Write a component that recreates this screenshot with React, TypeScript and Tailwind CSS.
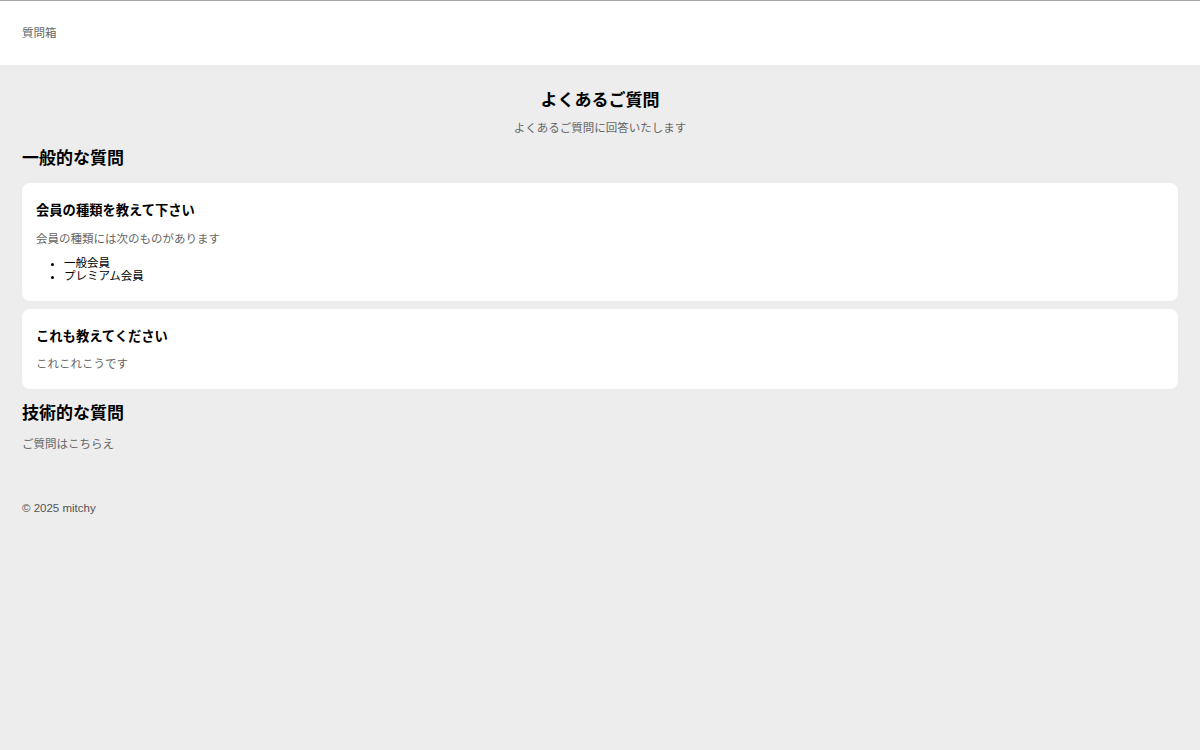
const font = { fontFamily: '"Liberation Sans", "Noto Sans CJK JP", sans-serif' };

const App = () => {
    return (
        <div className="min-h-screen bg-[#ededed]" style={font}>
            {/* ヘッダー */}
            <header className="h-[65px] border-t border-[#a3a3a3] bg-white px-[22px] flex items-center">
                <span className="text-[11.5px] leading-4 text-[#666]">質問箱</span>
            </header>

            <main className="px-[22px] pt-6">
                <h1 className="text-center text-[17px] leading-6 font-bold text-black">よくあるご質問</h1>
                <p className="mt-[7px] text-center text-[11.5px] leading-4 text-[#666]">よくあるご質問に回答いたします</p>

                <h2 className="mt-[11px] text-[17px] leading-6 font-bold text-black">一般的な質問</h2>

                <div className="mt-3 rounded-lg bg-white px-[14px] pt-[18px] pb-[18px]">
                    <h3 className="text-[13.3px] leading-5 font-bold text-black">会員の種類を教えて下さい</h3>
                    <p className="mt-[10px] text-[11.5px] leading-4 text-[#666]">会員の種類には次のものがあります</p>
                    <ul className="mt-[10px] list-disc pl-[28px] text-[11.5px] leading-[13px] text-black">
                        <li>一般会員</li>
                        <li>プレミアム会員</li>
                    </ul>
                </div>

                <div className="mt-2 rounded-lg bg-white px-[14px] pt-[18px] pb-[17px]">
                    <h3 className="text-[13.3px] leading-5 font-bold text-black">これも教えてください</h3>
                    <p className="mt-[9px] text-[11.5px] leading-4 text-[#666]">これこれこうです</p>
                </div>

                <h2 className="mt-[13px] text-[17px] leading-6 font-bold text-black">技術的な質問</h2>
                <p className="mt-[10px] text-[11.5px] leading-4 text-[#666]">ご質問はこちらえ</p>
            </main>

            <footer className="px-[22px] mt-12">
                <p className="text-[11.5px] leading-4 text-[#555]">© 2025 mitchy</p>
            </footer>
        </div>
    );
};

export default App;
